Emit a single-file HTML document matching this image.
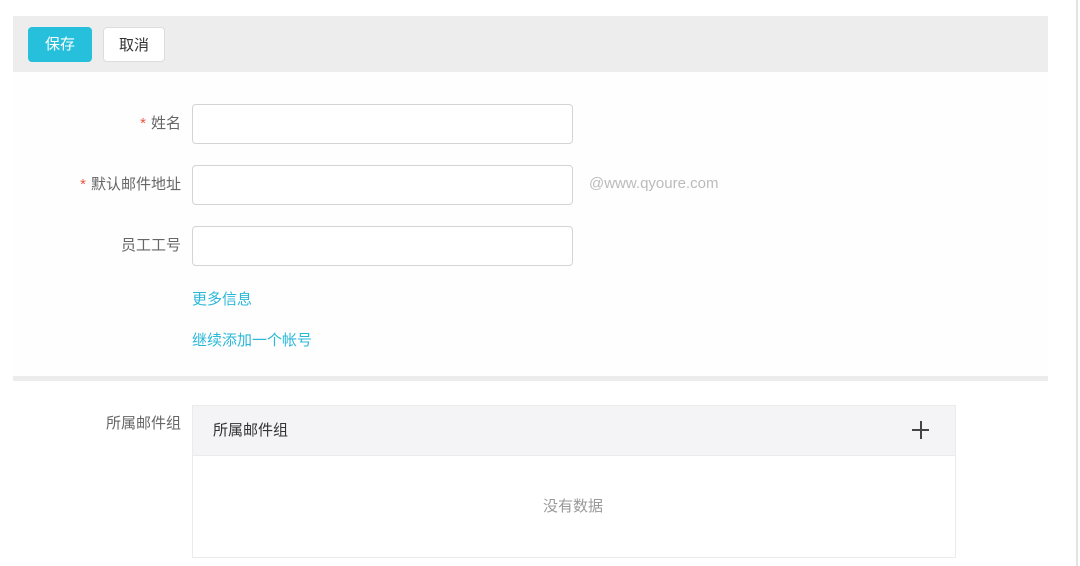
<!DOCTYPE html>
<html><head><meta charset="utf-8"><style>
*{margin:0;padding:0;box-sizing:border-box}
body{width:1080px;height:566px;background:#fff;position:relative;overflow:hidden;font-family:"Liberation Sans","Noto Sans CJK SC",sans-serif;font-size:15px}
.a{position:absolute}
.bar{left:13px;top:16px;width:1035px;height:56px;background:#ededed}
.btn{top:27px;height:35px;border-radius:4px;line-height:35px;text-align:center;font-size:15px}
.inp{left:192px;width:381px;height:40px;border:1px solid #d4d4d4;border-radius:4px;background:#fff}
.lbl{right:899px;color:#666;font-size:15px;white-space:nowrap}
.lbl b{color:#e9573f;font-weight:normal;margin-right:5px}
.link{left:192px;color:#2bb8d8;font-size:15px}
</style></head><body>
<div class="a" style="left:13px;top:72px;width:1035px;height:304px;background:#fefefe"></div>
<div class="a bar"></div>
<div class="a btn" style="left:28px;width:64px;background:#26bfdc;color:#fff">保存</div>
<div class="a btn" style="left:103px;width:62px;background:#fff;border:1px solid #ddd;color:#333">取消</div>
<div class="a lbl" style="top:112px"><b>*</b>姓名</div>
<div class="a inp" style="top:104px"></div>
<div class="a lbl" style="top:173px"><b>*</b>默认邮件地址</div>
<div class="a inp" style="top:165px"></div>
<div class="a" style="left:589px;top:175px;color:#bbb;font-size:15px">@www.qyoure.com</div>
<div class="a lbl" style="top:234px">员工工号</div>
<div class="a inp" style="top:226px"></div>
<div class="a link" style="top:288px">更多信息</div>
<div class="a link" style="top:329px">继续添加一个帐号</div>
<div class="a" style="left:13px;top:376px;width:1035px;height:5px;background:#ececec"></div>
<div class="a lbl" style="top:412px">所属邮件组</div>
<div class="a" style="left:192px;top:405px;width:764px;height:153px;border:1px solid #ebebeb;background:#fff"></div>
<div class="a" style="left:192px;top:405px;width:764px;height:51px;background:#f4f4f6;border:1px solid #ebebeb"></div>
<div class="a" style="left:213px;top:419px;color:#333;font-size:15px">所属邮件组</div>
<div class="a" style="left:912px;top:421px;width:17px;height:18px">
<div class="a" style="left:0;top:8px;width:17px;height:1.5px;background:#444"></div>
<div class="a" style="left:8px;top:0;width:1.5px;height:18px;background:#444"></div></div>
<div class="a" style="left:543px;top:495px;color:#999;font-size:15px">没有数据</div>
<div class="a" style="left:1076px;top:0;width:2px;height:566px;background:#e4e4e4"></div>
</body></html>
